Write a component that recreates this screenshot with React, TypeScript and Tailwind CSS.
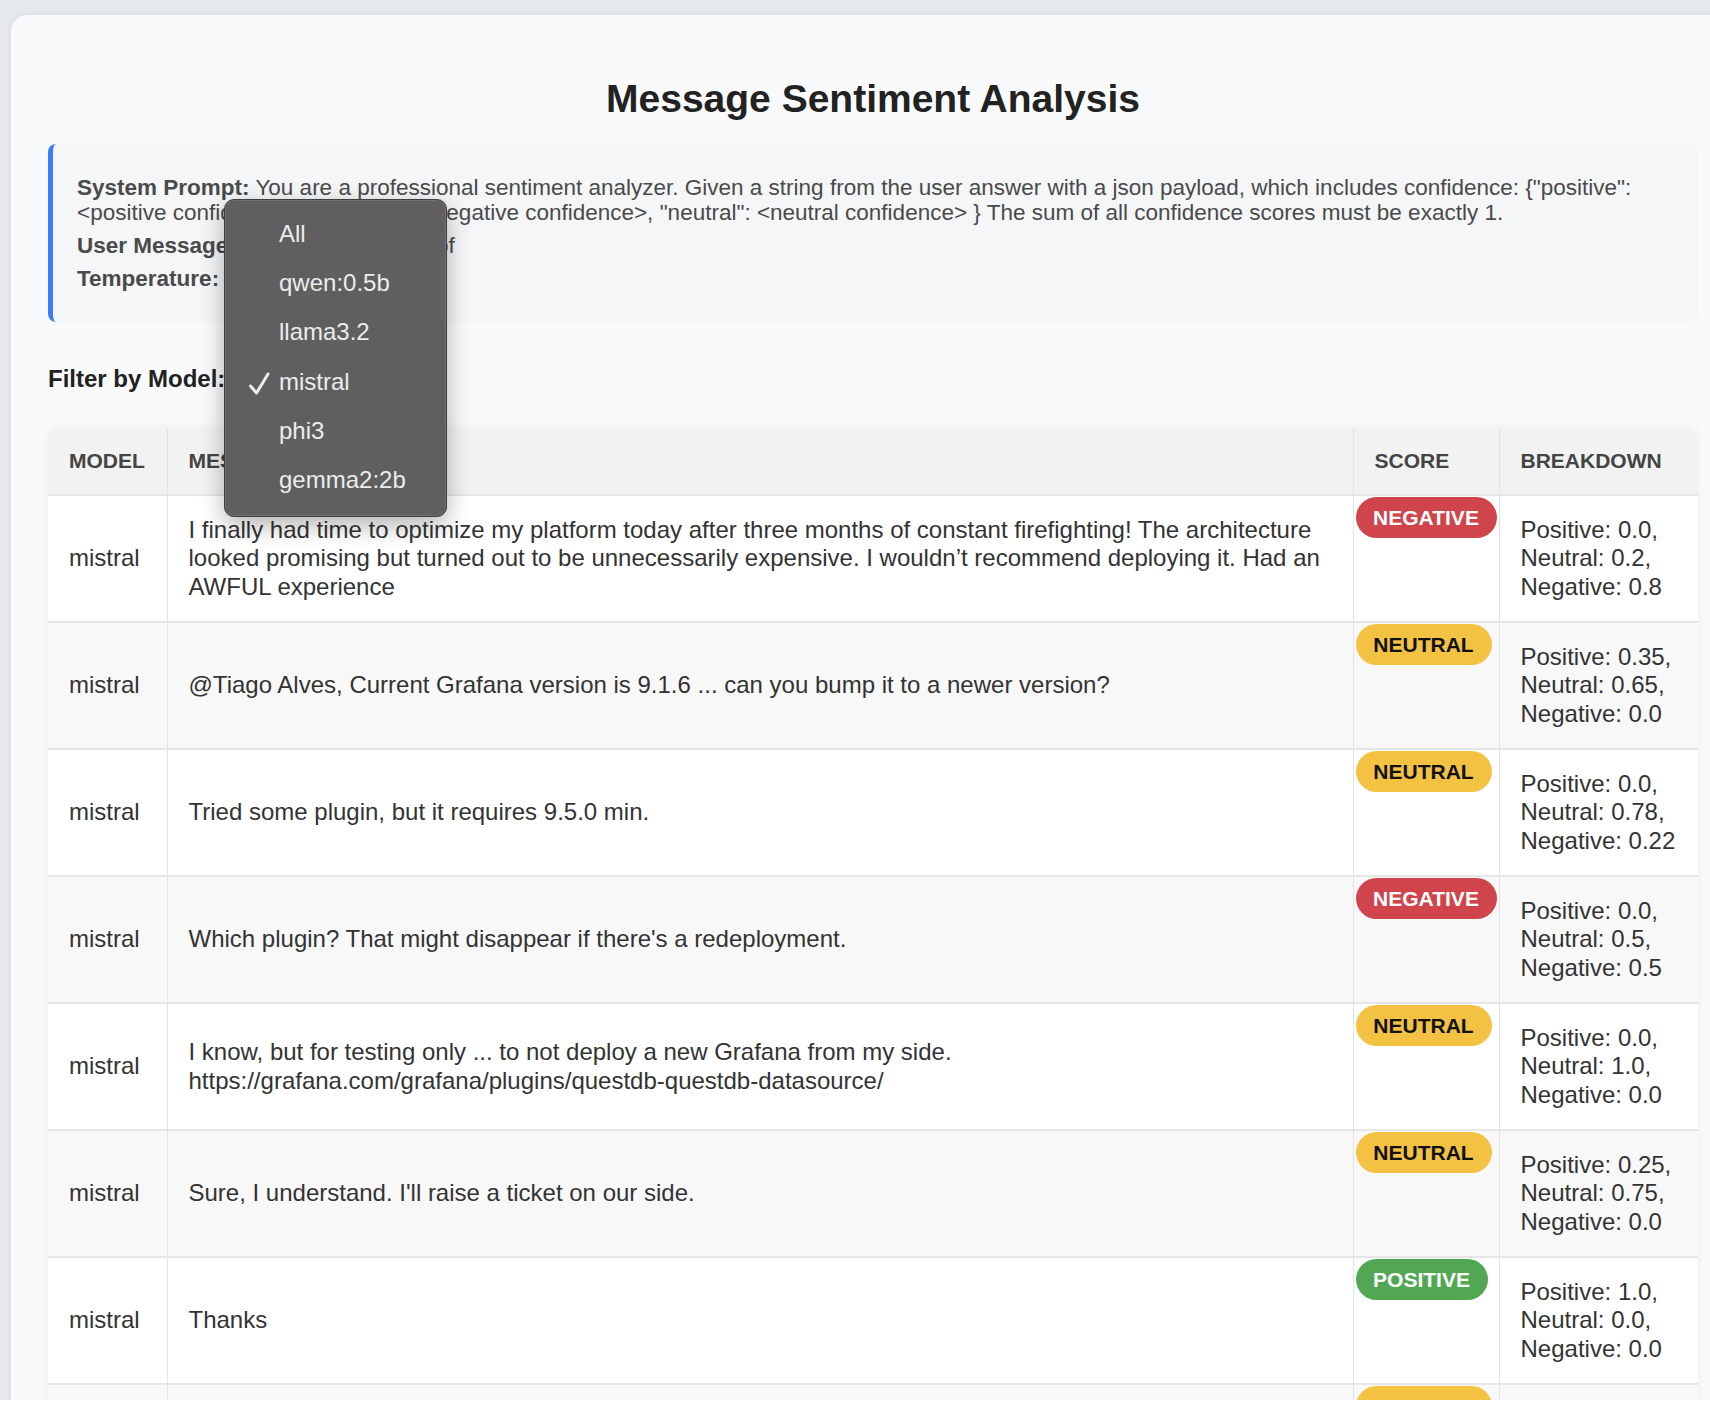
import React from "react";

type Row = {
  model: string;
  message: string;
  score: "NEGATIVE" | "NEUTRAL" | "POSITIVE";
  pos: string;
  neu: string;
  neg: string;
};

const rows: Row[] = [
  {
    model: "mistral",
    message:
      "I finally had time to optimize my platform today after three months of constant firefighting! The architecture looked promising but turned out to be unnecessarily expensive. I wouldn’t recommend deploying it. Had an AWFUL experience",
    score: "NEGATIVE",
    pos: "0.0",
    neu: "0.2",
    neg: "0.8",
  },
  {
    model: "mistral",
    message:
      "@Tiago Alves, Current Grafana version is 9.1.6 ... can you bump it to a newer version?",
    score: "NEUTRAL",
    pos: "0.35",
    neu: "0.65",
    neg: "0.0",
  },
  {
    model: "mistral",
    message: "Tried some plugin, but it requires 9.5.0 min.",
    score: "NEUTRAL",
    pos: "0.0",
    neu: "0.78",
    neg: "0.22",
  },
  {
    model: "mistral",
    message: "Which plugin? That might disappear if there's a redeployment.",
    score: "NEGATIVE",
    pos: "0.0",
    neu: "0.5",
    neg: "0.5",
  },
  {
    model: "mistral",
    message:
      "I know, but for testing only ... to not deploy a new Grafana from my side. https://grafana.com/grafana/plugins/questdb-questdb-datasource/",
    score: "NEUTRAL",
    pos: "0.0",
    neu: "1.0",
    neg: "0.0",
  },
  {
    model: "mistral",
    message: "Sure, I understand. I'll raise a ticket on our side.",
    score: "NEUTRAL",
    pos: "0.25",
    neu: "0.75",
    neg: "0.0",
  },
  {
    model: "mistral",
    message: "Thanks",
    score: "POSITIVE",
    pos: "1.0",
    neu: "0.0",
    neg: "0.0",
  },
  {
    model: "mistral",
    message: "Let me know once it is deployed.",
    score: "NEUTRAL",
    pos: "0.1",
    neu: "0.9",
    neg: "0.0",
  },
];

function Badge({ score }: { score: Row["score"] }) {
  if (score === "NEGATIVE")
    return (
      <span className="inline-flex h-[41px] w-[141px] items-center justify-center rounded-full bg-[#d0444c] text-[21px] font-bold leading-none text-white">
        NEGATIVE
      </span>
    );
  if (score === "POSITIVE")
    return (
      <span className="inline-flex h-[41px] w-[132px] items-center justify-center rounded-full bg-[#52a852] text-[21px] font-bold leading-none text-white">
        POSITIVE
      </span>
    );
  return (
    <span className="inline-flex h-[41px] w-[136px] items-center justify-center rounded-full bg-[#f4c243] text-[21px] font-bold leading-none text-[#111]">
      NEUTRAL
    </span>
  );
}

const menuItems = ["All", "qwen:0.5b", "llama3.2", "mistral", "phi3", "gemma2:2b"];

export default function App() {
  return (
    <div
      className="relative h-[1400px] w-[1710px] overflow-hidden bg-[#e5e9ed]"
      style={{ fontFamily: '"Liberation Sans", Arial, Helvetica, sans-serif' }}
    >
      <div className="ml-[11px] mt-[15px] w-[1724px] rounded-[16px] bg-[#f9fafb] px-[37px] pb-[40px] pt-[62px] shadow-[0_0_6px_rgba(0,0,0,0.06)]">
        <h1 className="text-center text-[39px] font-bold leading-[44px] text-[#222]">
          Message Sentiment Analysis
        </h1>

        <div className="mt-[23px] rounded-[8px] border-l-[5px] border-[#3b7cf5] bg-[#f4f6f8] pb-[31px] pl-[24px] pr-[24px] pt-[31px] text-[22.5px] leading-[25px] text-[#4a4a4a]">
          <p>
            <span className="font-bold">System Prompt:</span> You are a professional sentiment analyzer. Given a string from the user answer with a json payload, which includes confidence: {"{"}"positive": &lt;positive confidence&gt;, "negative": &lt;negative confidence&gt;, "neutral": &lt;neutral confidence&gt; {"}"} The sum of all confidence scores must be exactly 1.
          </p>
          <p className="mt-[8px]">
            <span className="font-bold">User Message:</span> Listed in the tables of
          </p>
          <p className="mt-[8px]">
            <span className="font-bold">Temperature:</span> 0.0
          </p>
        </div>

        <div className="mt-[44px] flex items-center">
          <span className="text-[24px] font-bold leading-[26px] text-[#222]">Filter by Model:</span>
        </div>

        <div className="mt-[36px] overflow-hidden rounded-t-[10px] bg-white shadow-[0_0_8px_rgba(0,0,0,0.06)]">
          <table className="w-[1650px] table-fixed border-collapse text-[24px] leading-[28.4px] text-[#333]">
            <colgroup>
              <col className="w-[119px]" />
              <col className="w-[1186px]" />
              <col className="w-[146px]" />
              <col className="w-[199px]" />
            </colgroup>
            <thead>
              <tr className="h-[67px] bg-[#f2f2f2] text-left text-[21px] font-bold text-[#444]">
                <th className="border-r border-[#e3e3e3] px-[21px]">MODEL</th>
                <th className="border-r border-[#e3e3e3] px-[21px]">MESSAGE</th>
                <th className="border-r border-[#e3e3e3] px-[21px]">SCORE</th>
                <th className="px-[21px]">BREAKDOWN</th>
              </tr>
            </thead>
            <tbody>
              {rows.map((r, i) => (
                <tr
                  key={i}
                  className={`h-[127px] border-t-2 border-[#e6e6e6] ${i % 2 === 1 ? "bg-[#f8f8f8]" : "bg-white"}`}
                >
                  <td className="border-r border-[#e3e3e3] px-[21px] align-middle">{r.model}</td>
                  <td className="border-r border-[#e3e3e3] px-[21px] align-middle">{r.message}</td>
                  <td className="border-r border-[#e3e3e3] px-[2px] pt-[1px] align-top">
                    <Badge score={r.score} />
                  </td>
                  <td className="px-[21px] align-middle">
                    Positive: {r.pos},<br />
                    Neutral: {r.neu},<br />
                    Negative: {r.neg}
                  </td>
                </tr>
              ))}
            </tbody>
          </table>
        </div>
      </div>

      <div className="absolute left-[224px] top-[199px] h-[318px] w-[223px] rounded-[10px] border border-[#3e3e3e] bg-[#5f5f5f] pt-[9px] shadow-[0_8px_24px_rgba(0,0,0,0.3),inset_0_0_0_1px_rgba(255,255,255,0.12)]">
        {menuItems.map((m) => (
          <div key={m} className="relative flex h-[49.3px] items-center pl-[54px] text-[24px] text-[#ececec]">
            {m === "mistral" && (
              <svg
                className="absolute left-[23px] top-[14px]"
                width="22"
                height="24"
                viewBox="0 0 22 24"
                fill="none"
                stroke="#ececec"
                strokeWidth="3"
                strokeLinecap="round"
                strokeLinejoin="round"
              >
                <path d="M2.5 15 L8.5 22 L20 3" />
              </svg>
            )}
            {m}
          </div>
        ))}
      </div>
    </div>
  );
}
